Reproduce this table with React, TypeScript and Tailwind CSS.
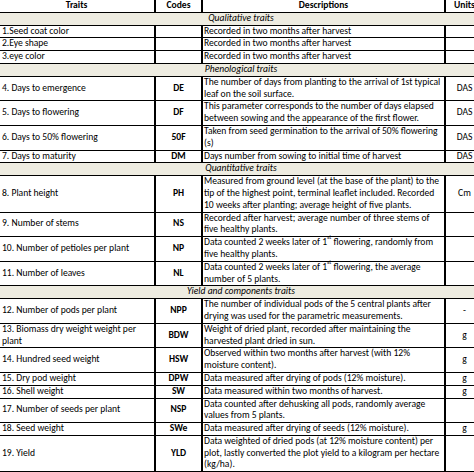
type Row = {
  trait: React.ReactNode;
  code?: string;
  desc: React.ReactNode;
  unit?: string;
};

type Section = { title: string; rows: Row[] };

const St = () => <sup className="align-[3px] text-[6px] leading-none">st</sup>;

const sections: Section[] = [
  {
    title: "Qualitative traits",
    rows: [
      { trait: "1.Seed coat color", desc: "Recorded in two months after harvest" },
      { trait: "2.Eye shape", desc: "Recorded in two months after harvest" },
      { trait: "3.eye color", desc: "Recorded in two months after harvest" },
    ],
  },
  {
    title: "Phenological traits",
    rows: [
      {
        trait: "4. Days to emergence",
        code: "DE",
        desc: (
          <>
            The number of days from planting to the arrival of 1st typical
            <br />
            leaf on the soil surface.
          </>
        ),
        unit: "DAS",
      },
      {
        trait: "5. Days to flowering",
        code: "DF",
        desc: (
          <>
            This parameter corresponds to the number of days elapsed
            <br />
            between sowing and the appearance of the first flower.
          </>
        ),
        unit: "DAS",
      },
      {
        trait: "6. Days to 50% flowering",
        code: "50F",
        desc: (
          <>
            Taken from seed germination to the arrival of 50% flowering
            <br />
            (s)
          </>
        ),
        unit: "DAS",
      },
      {
        trait: "7. Days to maturity",
        code: "DM",
        desc: "Days number from sowing to initial time of harvest",
        unit: "DAS",
      },
    ],
  },
  {
    title: "Quantitative traits",
    rows: [
      {
        trait: "8. Plant height",
        code: "PH",
        desc: (
          <>
            Measured from ground level (at the base of the plant) to the
            <br />
            tip of the highest point, terminal leaflet included. Recorded
            <br />
            10 weeks after planting; average height of five plants.
          </>
        ),
        unit: "Cm",
      },
      {
        trait: "9. Number of stems",
        code: "NS",
        desc: (
          <>
            Recorded after harvest; average number of three stems of
            <br />
            five healthy plants.
          </>
        ),
      },
      {
        trait: "10. Number of petioles per plant",
        code: "NP",
        desc: (
          <>
            Data counted 2 weeks later of 1<St /> flowering, randomly from
            <br />
            five healthy plants.
          </>
        ),
      },
      {
        trait: "11. Number of leaves",
        code: "NL",
        desc: (
          <>
            Data counted 2 weeks later of 1<St /> flowering, the average
            <br />
            number of 5 plants.
          </>
        ),
      },
    ],
  },
  {
    title: "Yield and components traits",
    rows: [
      {
        trait: "12. Number of pods per plant",
        code: "NPP",
        desc: (
          <>
            The number of individual pods of the 5 central plants after
            <br />
            drying was used for the parametric measurements.
          </>
        ),
        unit: "-",
      },
      {
        trait: (
          <>
            13. Biomass dry weight weight per
            <br />
            plant
          </>
        ),
        code: "BDW",
        desc: (
          <>
            Weight of dried plant, recorded after maintaining the
            <br />
            harvested plant dried in sun.
          </>
        ),
        unit: "g",
      },
      {
        trait: "14. Hundred seed weight",
        code: "HSW",
        desc: (
          <>
            Observed within two months after harvest (with 12%
            <br />
            moisture content).
          </>
        ),
        unit: "g",
      },
      {
        trait: "15. Dry pod weight",
        code: "DPW",
        desc: "Data measured after drying of pods (12% moisture).",
        unit: "g",
      },
      {
        trait: "16. Shell weight",
        code: "SW",
        desc: "Data measured within two months of harvest.",
        unit: "g",
      },
      {
        trait: "17. Number of seeds per plant",
        code: "NSP",
        desc: (
          <>
            Data counted after dehusking all pods, randomly average
            <br />
            values from 5 plants.
          </>
        ),
      },
      {
        trait: "18. Seed weight",
        code: "SWe",
        desc: "Data measured after drying of seeds (12% moisture).",
        unit: "g",
      },
      {
        trait: "19. Yield",
        code: "YLD",
        desc: (
          <>
            Data weighted of dried pods (at 12% moisture content) per
            <br />
            plot, lastly converted the plot yield to a kilogram per hectare
            <br />
            (kg/ha).
          </>
        ),
      },
    ],
  },
];

const cell = "border-y border-x-2 border-black p-0 align-middle";

export default function App() {
  return (
    <div className="h-[472px] w-[474px] overflow-hidden bg-white">
      <table
        className="-mt-[2px] -ml-[3px] w-[486px] table-fixed border-collapse text-[9.6px] leading-[11.8px] text-black"
        style={{ fontFamily: "Carlito, Lato, sans-serif" }}
      >
        <colgroup>
          <col className="w-[157px]" />
          <col className="w-[47px]" />
          <col className="w-[243px]" />
          <col className="w-[39px]" />
        </colgroup>
        <thead>
          <tr className="font-bold">
            <th className={`${cell} pt-[1px] text-center`}>Traits</th>
            <th className={`${cell} pt-[1px] text-center`}>Codes</th>
            <th className={`${cell} pt-[1px] text-center`}>Descriptions</th>
            <th className={`${cell} pt-[1px] text-center`}>Units</th>
          </tr>
        </thead>
        <tbody>
          {sections.map((s) => (
            <SectionRows key={s.title} section={s} />
          ))}
        </tbody>
      </table>
    </div>
  );
}

function SectionRows({ section }: { section: Section }) {
  return (
    <>
      <tr>
        <td
          colSpan={4}
          className="border-y border-black bg-[#eeece1] p-0 text-center italic"
        >
          {section.title}
        </td>
      </tr>
      {section.rows.map((r, i) => (
        <tr key={i}>
          <td className={`${cell} pl-[3px] text-left`}>{r.trait}</td>
          <td className={`${cell} text-center font-bold`}>{r.code ?? ""}</td>
          <td className={`${cell} whitespace-nowrap pl-[1px] text-left`}>{r.desc}</td>
          <td className={`${cell} text-center`}>{r.unit ?? ""}</td>
        </tr>
      ))}
    </>
  );
}
